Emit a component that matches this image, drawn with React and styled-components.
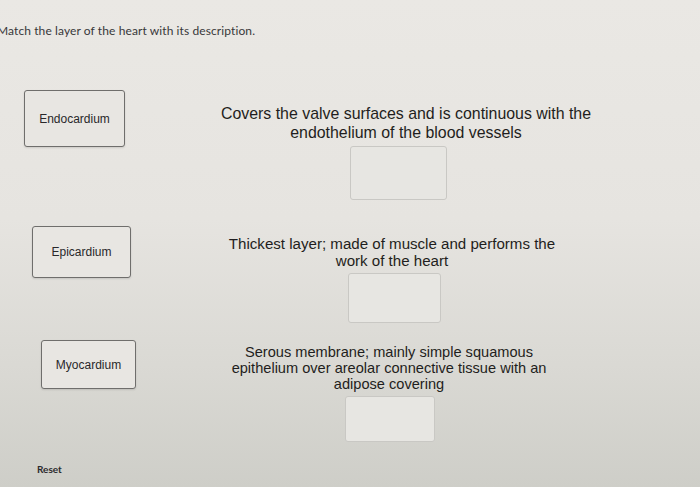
import React from 'react';
import styled, { createGlobalStyle } from 'styled-components';

const GlobalStyle = createGlobalStyle`
  html, body {
    margin: 0;
    padding: 0;
  }
  body {
    background: #e3e1dd;
  }
`;

const ITEMS = [
    {
        term: 'Endocardium',
        termX: 24, termW: 101, termH: 57,
        text: 'Covers the valve surfaces and is continuous with the\nendothelium of the blood vessels',
        size: 15.9, lh: 19, textTop: 14, center: 406,
        dropW: 97, dropH: 54, dropShift: -8,
        gap: 0,
    },
    {
        term: 'Epicardium',
        termX: 32, termW: 99, termH: 52,
        text: 'Thickest layer; made of muscle and performs the\nwork of the heart',
        size: 15.1, lh: 17, textTop: 9, center: 392,
        dropW: 93, dropH: 50, dropShift: 2,
        gap: 26,
    },
    {
        term: 'Myocardium',
        termX: 41, termW: 95, termH: 49,
        text: 'Serous membrane; mainly simple squamous\nepithelium over areolar connective tissue with an\nadipose covering',
        size: 14.6, lh: 16, textTop: 4, center: 389,
        dropW: 90, dropH: 46, dropShift: 1,
        gap: 17,
    },
];

const App = () => {
    return (
        <>
            <GlobalStyle />
            <Page>
                <Title>Match the layer of the heart with its description.</Title>
                <Rows>
                    {ITEMS.map(item => (
                        <Row key={item.term} $gap={item.gap}>
                            <TermCell $x={item.termX}>
                                <Term $w={item.termW} $h={item.termH}>{item.term}</Term>
                            </TermCell>
                            <Target $center={item.center} $top={item.textTop}>
                                <Description $size={item.size} $lh={item.lh}>{item.text}</Description>
                                <DropBox $w={item.dropW} $h={item.dropH} $shift={item.dropShift} />
                            </Target>
                        </Row>
                    ))}
                </Rows>
                <Reset>Reset</Reset>
            </Page>
        </>
    );
};

const Page = styled.div`
  position: relative;
  width: 700px;
  height: 487px;
  overflow: hidden;
  box-sizing: border-box;
  padding-top: 24px;
  background: linear-gradient(to bottom, #eae8e4 0%, #e6e4e0 45%, #dad9d4 75%, #cecec8 100%);
  font-family: Lato, "Open Sans", sans-serif;
`;

const Title = styled.div`
  margin-left: -3px;
  font-size: 12px;
  line-height: 14px;
  color: #38373a;
  letter-spacing: 0.1px;
`;

const Rows = styled.div`
  margin-top: 52px;
  display: flex;
  flex-direction: column;
`;

const Row = styled.div`
  display: flex;
  align-items: flex-start;
  margin-top: ${p => p.$gap}px;
`;

const TermCell = styled.div`
  width: 200px;
  flex-shrink: 0;
  box-sizing: border-box;
  padding-left: ${p => p.$x}px;
`;

const Term = styled.div`
  width: ${p => p.$w}px;
  height: ${p => p.$h}px;
  box-sizing: border-box;
  display: flex;
  align-items: center;
  justify-content: center;
  border: 1px solid #6f6e6c;
  border-radius: 3px;
  background: #e8e6e2;
  box-shadow: 0 1px 2px rgba(0, 0, 0, 0.12);
  font-family: "Liberation Sans", Arial, sans-serif;
  font-size: 12px;
  color: #29282a;
`;

const Target = styled.div`
  width: 420px;
  margin-left: ${p => p.$center - 410}px;
  padding-top: ${p => p.$top}px;
  display: flex;
  flex-direction: column;
  align-items: center;
`;

const Description = styled.div`
  font-family: "Liberation Sans", Arial, sans-serif;
  font-size: ${p => p.$size}px;
  line-height: ${p => p.$lh}px;
  color: #1f1e20;
  text-align: center;
  white-space: pre-line;
`;

const DropBox = styled.div`
  margin-top: 4px;
  margin-left: ${p => (p.$shift > 0 ? p.$shift * 2 : 0)}px;
  margin-right: ${p => (p.$shift < 0 ? -p.$shift * 2 : 0)}px;
  width: ${p => p.$w}px;
  height: ${p => p.$h}px;
  box-sizing: border-box;
  border: 1px solid #c9c8c4;
  border-radius: 3px;
  background: #e7e6e2;
`;

const Reset = styled.div`
  margin-top: 21px;
  margin-left: 37px;
  font-size: 10px;
  line-height: 12px;
  font-weight: 700;
  color: #2c2b2d;
`;

export default App;
